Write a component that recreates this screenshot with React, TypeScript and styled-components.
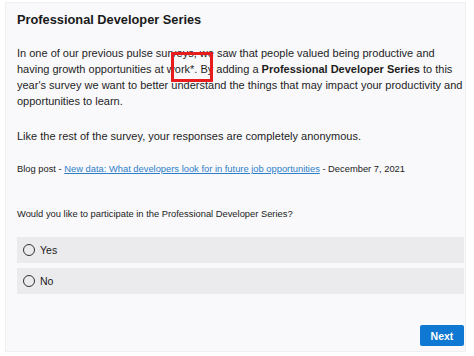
import React from "react";
import styled, { createGlobalStyle } from "styled-components";

const Global = createGlobalStyle`
  html, body { margin: 0; padding: 0; background: #ffffff; }
  body { font-family: "Liberation Sans", Arial, sans-serif; color: #1b1b1b; }
  * { box-sizing: border-box; }
`;

const Card = styled.div`
  position: relative;
  margin: 2px 8px 4px 5px;
  height: 350px;
  background: #f9f9fb;
  border: 1px solid #f0f0f3;
  padding: 7px 1px 0 11px;
  display: flex;
  flex-direction: column;
`;

const Title = styled.h1`
  margin: 0;
  font-size: 12.8px;
  line-height: 19px;
  font-weight: 700;
  color: #1a1a1a;
`;

const Para = styled.p<{ $mt: number }>`
  margin: ${(p) => p.$mt}px -4px 0 0;
  font-size: 11px;
  line-height: 16px;
  color: #1e1e1e;
`;

const Small = styled.p<{ $mt: number }>`
  margin: ${(p) => p.$mt}px 0 0;
  font-size: 9.35px;
  line-height: 14px;
  color: #222;
`;

const Link = styled.a`
  color: #2e7fc8;
  text-decoration: underline;
`;

const Options = styled.div`
  margin-top: 16px;
  display: flex;
  flex-direction: column;
  gap: 5px;
`;

const Option = styled.label`
  height: 26px;
  background: #ebebed;
  display: flex;
  align-items: center;
  padding-left: 6px;
  gap: 5px;
  font-size: 10.5px;
  color: #1a1a1a;
`;

const Radio = styled.span`
  width: 12px;
  height: 12px;
  border-radius: 50%;
  border: 1.4px solid #333;
  background: transparent;
`;

const Footer = styled.div`
  margin-top: auto;
  margin-bottom: 5px;
  display: flex;
  justify-content: flex-end;
`;

const NextButton = styled.button`
  width: 44px;
  height: 21px;
  background: #0f78d2;
  color: #fff;
  border: none;
  border-radius: 2px;
  font-family: "Liberation Sans", Arial, sans-serif;
  font-size: 10.5px;
  font-weight: 700;
  padding: 0;
`;

const Highlight = styled.div`
  position: absolute;
  left: 165px;
  top: 49px;
  width: 42px;
  height: 30px;
  border: 3px solid #e81c1c;
`;

export default function App() {
  return (
    <>
      <Global />
      <Card>
        <Title>Professional Developer Series</Title>
        <Para $mt={16}>
          In one of our previous pulse surveys, we saw that people valued being productive and having
          growth opportunities at work*. By adding a <b>Professional Developer Series</b> to this
          year's survey we want to better understand the things that may impact your productivity and
          opportunities to learn.
        </Para>
        <Para $mt={19}>Like the rest of the survey, your responses are completely anonymous.</Para>
        <Small $mt={18}>
          Blog post - <Link href="#">New data: What developers look for in future job opportunities</Link> - December 7, 2021
        </Small>
        <Small $mt={31}>Would you like to participate in the Professional Developer Series?</Small>
        <Options>
          <Option>
            <Radio />
            Yes
          </Option>
          <Option>
            <Radio />
            No
          </Option>
        </Options>
        <Footer>
          <NextButton>Next</NextButton>
        </Footer>
        <Highlight />
      </Card>
    </>
  );
}
